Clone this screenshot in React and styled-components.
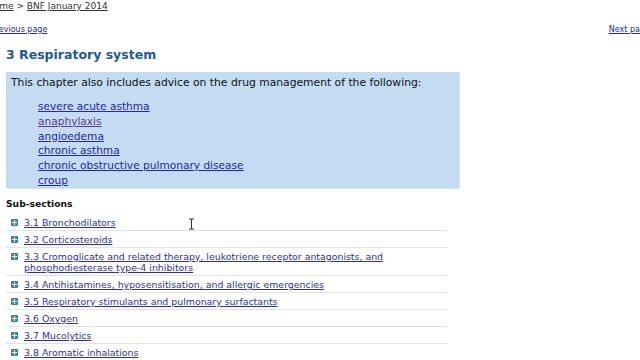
import React from 'react'
import styled, { createGlobalStyle } from 'styled-components'

const GlobalStyle = createGlobalStyle`
  html, body {
    margin: 0;
    padding: 0;
    background: #fff;
    overflow: hidden;
  }
  body {
    font-family: "DejaVu Sans", Verdana, sans-serif;
    font-size: 9.4px;
    color: #222;
  }
`

const conditions = [
  { name: 'severe acute asthma' },
  { name: 'anaphylaxis', visited: true },
  { name: 'angioedema' },
  { name: 'chronic asthma' },
  { name: 'chronic obstructive pulmonary disease' },
  { name: 'croup' },
]

const subSections = [
  '3.1 Bronchodilators',
  '3.2 Corticosteroids',
  '3.3 Cromoglicate and related therapy, leukotriene receptor antagonists, and phosphodiesterase type-4 inhibitors',
  '3.4 Antihistamines, hyposensitisation, and allergic emergencies',
  '3.5 Respiratory stimulants and pulmonary surfactants',
  '3.6 Oxygen',
  '3.7 Mucolytics',
  '3.8 Aromatic inhalations',
]

const Page = styled.div`
  width: 640px;
  height: 360px;
  overflow: hidden;
  position: relative;
`

// the page is scrolled a little sideways, so the outer bars start left of the window
const Breadcrumb = styled.div`
  margin-left: -13px;
  font-size: 9px;
  line-height: 12px;
  color: #333;
  white-space: nowrap;

  a {
    color: #333;
    text-decoration: underline;
  }
`

const PageNav = styled.div`
  display: flex;
  justify-content: space-between;
  margin: 12px -10px 0 -9px;
  font-size: 8px;
  line-height: 12px;
  white-space: nowrap;

  a {
    color: #2326a8;
    text-decoration: underline;
  }
`

const Content = styled.div`
  padding: 0 6px;
`

const Title = styled.h1`
  margin: 11px 0 9px;
  font-size: 12.5px;
  font-weight: bold;
  color: #1d5a96;
  line-height: 16px;
`

const InfoBox = styled.div`
  width: 448px;
  background: #c4dcf1;
  padding: 3px 0 0 5px;
  box-shadow: 1px 1px 0 #d6e4ef;
`

const InfoLead = styled.p`
  margin: 0 0 8px;
  font-size: 10.75px;
  line-height: 16px;
  color: #111;
`

const ConditionList = styled.ul`
  list-style: none;
  margin: 0;
  padding: 0 0 0 27px;
`

const ConditionItem = styled.li`
  font-size: 10.6px;
  line-height: 14.8px;

  a {
    color: ${p => (p.$visited ? '#5b3c8c' : '#2326a8')};
    text-decoration: underline;
  }
`

const SubHeading = styled.h2`
  margin: 10px 0 4px;
  font-size: 9.2px;
  font-weight: bold;
  color: #111;
  line-height: 12px;
`

const SubList = styled.ul`
  list-style: none;
  margin: 0;
  padding: 0;
  width: 441px;
`

const SubRow = styled.li`
  display: flex;
  align-items: flex-start;
  gap: 6px;
  padding: 3px 0 2px 5px;
  border-bottom: 1px solid #e3e3e3;
  font-size: 9.4px;
  line-height: 11px;

  a {
    color: #2a30a8;
    text-decoration: underline;
  }
`

const Expand = styled.span`
  flex: 0 0 auto;
  width: 7px;
  height: 7px;
  margin-top: 2px;
  background: #3d7bbd;
  border-radius: 1px;
  position: relative;

  &::before,
  &::after {
    content: '';
    position: absolute;
    background: #fff;
  }
  &::before {
    left: 1px;
    right: 1px;
    top: 3px;
    height: 1px;
  }
  &::after {
    top: 1px;
    bottom: 1px;
    left: 3px;
    width: 1px;
  }
`

const Cursor = styled.svg`
  position: absolute;
  left: 188px;
  top: 218px;
`

const App = () => (
  <Page>
    <GlobalStyle />
    <Breadcrumb>
      <a href="#">Home</a> &gt; <a href="#">BNF January 2014</a>
    </Breadcrumb>
    <PageNav>
      <a href="#">Previous page</a>
      <a href="#">Next page</a>
    </PageNav>
    <Content>
      <Title>3 Respiratory system</Title>
      <InfoBox>
        <InfoLead>
          This chapter also includes advice on the drug management of the following:
        </InfoLead>
        <ConditionList>
          {conditions.map(c => (
            <ConditionItem key={c.name} $visited={c.visited}>
              <a href="#">{c.name}</a>
            </ConditionItem>
          ))}
        </ConditionList>
      </InfoBox>
      <SubHeading>Sub-sections</SubHeading>
      <SubList>
        {subSections.map(s => (
          <SubRow key={s}>
            <Expand />
            <a href="#">{s}</a>
          </SubRow>
        ))}
      </SubList>
    </Content>
    <Cursor width="7" height="12" viewBox="0 0 7 12">
      <path d="M1 1h5M3.5 1v10M1 11h5" stroke="#333" strokeWidth="1" fill="none" />
    </Cursor>
  </Page>
)

export default App
